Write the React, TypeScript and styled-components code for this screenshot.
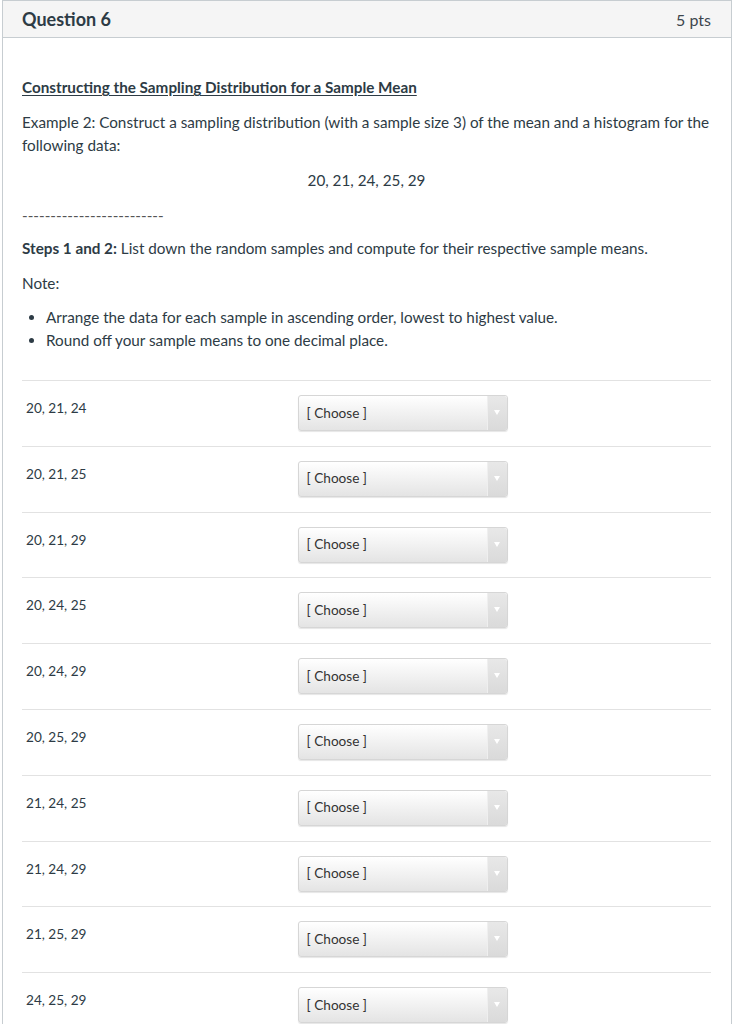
import React from "react";
import styled, { createGlobalStyle } from "styled-components";

const Global = createGlobalStyle`
  html, body { margin: 0; padding: 0; background: #fff; }
  body { font-family: Lato, "Noto Sans", "Liberation Sans", sans-serif; color: #2d3b45; }
  * { box-sizing: border-box; }
`;

const Card = styled.div`
  margin-left: 2px;
  width: 730px;
  border: 1px solid #c7cdd1;
  border-bottom: none;
  min-height: 1024px;
`;

const Header = styled.div`
  display: flex;
  align-items: center;
  justify-content: space-between;
  height: 37px;
  padding: 0 20px 0 19px;
  background: #f5f5f5;
  border-bottom: 1px solid #c7cdd1;
`;

const Title = styled.h2`
  margin: 0;
  font-size: 18px;
  font-weight: 700;
  color: #2d3b45;
`;

const Points = styled.div`
  font-size: 16px;
  color: #3d464d;
`;

const Body = styled.div`
  padding: 38px 20px 0 19px;
  font-size: 15.25px;
  line-height: 23px;
`;

const P = styled.p<{ $center?: boolean; $gap?: number }>`
  margin: 0 0 ${(p) => (p.$gap ?? 12)}px;
  text-align: ${(p) => (p.$center ? "center" : "left")};
`;

const Heading = styled.span`
  font-weight: 700;
  text-decoration: underline;
  text-underline-offset: 2px;
`;

const Dashes = styled(P)`
  color: #555;
`;

const List = styled.ul`
  margin: 0;
  padding-left: 24px;
`;

const Table = styled.div`
  margin-top: 28px;
  display: flex;
  flex-direction: column;
`;

const Row = styled.div`
  display: grid;
  grid-template-columns: 40% 1fr;
  height: 65.8px;
  border-top: 1px solid #e2e2e2;
  padding-top: 14px;
`;

const Label = styled.div`
  padding-left: 4px;
  padding-top: 3px;
  font-size: 13.6px;
  line-height: 20px;
  color: #2d3b45;
`;

const Select = styled.div`
  position: relative;
  width: 210px;
  height: 36px;
  border: 1px solid #d6d6d6;
  border-radius: 3px;
  background: linear-gradient(#ffffff, #e4e4e4);
  box-shadow: 0 1px 1px rgba(0, 0, 0, 0.1);
  display: flex;
  align-items: center;
  padding-left: 8px;
  font-size: 13.6px;
  color: #333;
`;

const Arrow = styled.div`
  position: absolute;
  top: 0;
  right: 0;
  bottom: 0;
  width: 20px;
  background: linear-gradient(#e8e8e8, #dadada);
  border-left: 1px solid #efefef;
  border-radius: 0 3px 3px 0;
  display: flex;
  align-items: center;
  justify-content: center;
  &::after {
    content: "";
    border-left: 3.5px solid transparent;
    border-right: 3.5px solid transparent;
    border-top: 5px solid #fff;
    margin-top: -1px;
  }
`;

const samples = [
  "20, 21, 24",
  "20, 21, 25",
  "20, 21, 29",
  "20, 24, 25",
  "20, 24, 29",
  "20, 25, 29",
  "21, 24, 25",
  "21, 24, 29",
  "21, 25, 29",
  "24, 25, 29",
];

export default function App() {
  return (
    <>
      <Global />
      <Card>
        <Header>
          <Title>Question 6</Title>
          <Points>5 pts</Points>
        </Header>
        <Body>
          <P>
            <Heading>Constructing the Sampling Distribution for a Sample Mean</Heading>
          </P>
          <P>
            Example 2: Construct a sampling distribution (with a sample size 3) of the mean and a
            histogram for the following data:
          </P>
          <P $center>20, 21, 24, 25, 29</P>
          <Dashes $gap={10}>-------------------------</Dashes>
          <P>
            <strong>Steps 1 and 2:</strong> List down the random samples and compute for their
            respective sample means.
          </P>
          <P $gap={11}>Note:</P>
          <List>
            <li>Arrange the data for each sample in ascending order, lowest to highest value.</li>
            <li>Round off your sample means to one decimal place.</li>
          </List>
          <Table>
            {samples.map((s) => (
              <Row key={s}>
                <Label>{s}</Label>
                <Select>
                  [ Choose ]
                  <Arrow />
                </Select>
              </Row>
            ))}
          </Table>
        </Body>
      </Card>
    </>
  );
}
